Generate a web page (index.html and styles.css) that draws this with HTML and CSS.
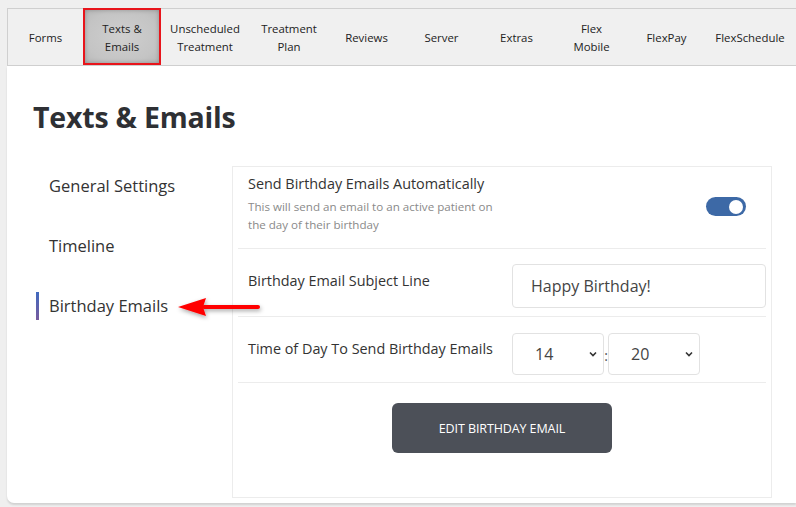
FILE: index.html
```html
<!DOCTYPE html>
<html>
<head>
<meta charset="utf-8">
<link rel="stylesheet" href="styles.css">
</head>
<body>
<nav class="nav">
  <div class="tab w76">Forms</div>
  <div class="tab w77 active">Texts &amp;<br>Emails</div>
  <div class="tab w88">Unscheduled<br>Treatment</div>
  <div class="tab w84">Treatment<br>Plan</div>
  <div class="tab w68">Reviews</div>
  <div class="tab w82">Server</div>
  <div class="tab w68">Extras</div>
  <div class="tab w82">Flex<br>Mobile</div>
  <div class="tab w68">FlexPay</div>
  <div class="tab w96">FlexSchedule</div>
</nav>
<main class="card">
  <h1 class="title">Texts &amp; Emails</h1>
  <div class="content">
    <aside class="side">
      <div class="side-item">General Settings</div>
      <div class="side-item">Timeline</div>
      <div class="side-item current">Birthday Emails</div>
      <svg class="arrow" width="96" height="30" viewBox="0 0 96 30">
        <defs>
          <filter id="sh" x="-20%" y="-50%" width="140%" height="200%">
            <feDropShadow dx="1" dy="2" stdDeviation="2" flood-color="#000" flood-opacity="0.35"/>
          </filter>
        </defs>
        <g filter="url(#sh)">
          <path d="M84 12 L30 12" stroke="#f00" stroke-width="4" stroke-linecap="round"/>
          <path d="M4 12 L32 3 L29 12 L32 21 Z" fill="#f00"/>
        </g>
      </svg>
    </aside>
    <section class="panel">
      <div class="row row-toggle">
        <div class="text">
          <div class="label">Send Birthday Emails Automatically</div>
          <div class="hint">This will send an email to an active patient on<br>the day of their birthday</div>
        </div>
        <div class="toggle"><span class="knob"></span></div>
      </div>
      <div class="row row-subject">
        <div class="label">Birthday Email Subject Line</div>
        <div class="input">Happy Birthday!</div>
      </div>
      <div class="row row-time">
        <div class="label">Time of Day To Send Birthday Emails</div>
        <div class="selects">
          <div class="select"><span>14</span><svg class="chev" width="8" height="6" viewBox="0 0 8 6"><path d="M1 1.5 L4 4.5 L7 1.5" fill="none" stroke="#333" stroke-width="1.6"/></svg></div>
          <span class="colon">:</span>
          <div class="select"><span>20</span><svg class="chev" width="8" height="6" viewBox="0 0 8 6"><path d="M1 1.5 L4 4.5 L7 1.5" fill="none" stroke="#333" stroke-width="1.6"/></svg></div>
        </div>
      </div>
      <div class="actions">
        <button class="btn">EDIT BIRTHDAY EMAIL</button>
      </div>
    </section>
  </div>
</main>
</body>
</html>
```
FILE: styles.css
```css
* { box-sizing: border-box; }
html, body { margin: 0; padding: 0; }
body {
  background: #efefef;
  font-family: "Open Sans", "Noto Sans", sans-serif;
  color: #333;
  width: 796px;
  height: 507px;
  overflow: hidden;
}
.nav {
  margin: 8px 0 0 7px;
  height: 58px;
  display: flex;
  background: #f0f0f0;
  border-top: 1px solid #cfcfcf;
  border-bottom: 1px solid #cfcfcf;
  border-left: 1px solid #cfcfcf;
}
.tab {
  display: flex;
  align-items: center;
  justify-content: center;
  text-align: center;
  font-size: 11.4px;
  line-height: 18px;
  color: #222;
  flex: none;
  padding-top: 2px;
}
.w68 { width: 75px; }
.w76 { width: 75px; }
.w77 { width: 78px; }
.w82 { width: 75px; }
.w84 { width: 80px; }
.w88 { width: 88px; }
.w96 { width: 92px; }
.tab.active {
  margin-top: -1px;
  height: 57px;
  border: 2px solid #e8141b;
  background: radial-gradient(ellipse at center, #cfcfcf 0%, #c4c4c4 70%, #b8b8b8 100%);
  box-shadow: inset 0 0 4px rgba(0,0,0,0.25);
}
.card {
  margin-left: 7px;
  height: 437px;
  background: #fff;
  border-bottom-left-radius: 7px;
  box-shadow: 0 2px 2px rgba(0,0,0,0.12);
}
.title {
  margin: 0;
  padding: 31px 0 0 26px;
  font-size: 28.5px;
  line-height: 40px;
  font-weight: 700;
  color: #2e3034;
  letter-spacing: -0.2px;
}
.content {
  display: flex;
  margin-top: 29px;
}
.side {
  width: 225px;
  flex: none;
  position: relative;
  padding-top: 6px;
}
.side-item {
  margin-left: 29px;
  padding-left: 10px;
  font-size: 16.5px;
  line-height: 28px;
  color: #333;
  border-left: 3px solid transparent;
  height: 28px;
  margin-bottom: 32px;
}
.side-item.current {
  border-left-color: #4a66b4;
  border-image: linear-gradient(#3e6ac0, #7a5a9c) 1;
}
.arrow {
  position: absolute;
  left: 167px;
  top: 129px;
}
.panel {
  width: 540px;
  height: 332px;
  border: 1px solid #ececec;
  padding: 0 5px;
}
.row {
  display: flex;
  border-bottom: 1px solid #ececec;
  padding-left: 10px;
}
.label {
  font-size: 14.4px;
  line-height: 20px;
  color: #333;
}
.row-toggle {
  height: 82px;
  padding-top: 7px;
  justify-content: space-between;
}
.hint {
  margin-top: 4px;
  font-size: 11.6px;
  line-height: 18px;
  color: #8a8a8a;
}
.toggle {
  width: 40px;
  height: 19px;
  background: #3d69a6;
  border-radius: 10px;
  margin: 23px 20px 0 0;
  position: relative;
}
.knob {
  position: absolute;
  right: 3px;
  top: 2.5px;
  width: 14px;
  height: 14px;
  border-radius: 50%;
  background: #fff;
}
.row-subject {
  height: 68px;
  padding-top: 15px;
  justify-content: space-between;
}
.row-subject .label { padding-top: 7px; }
.input {
  width: 254px;
  height: 44px;
  border: 1px solid #e2e2e2;
  border-radius: 4px;
  font-size: 16px;
  line-height: 42px;
  padding-left: 18px;
  color: #444;
}
.row-time {
  height: 66px;
  padding-top: 16px;
}
.row-time .label { padding-top: 6px; width: 264px; flex: none; }
.selects {
  display: flex;
  align-items: center;
  height: 42px;
}
.select {
  width: 92px;
  height: 42px;
  border: 1px solid #e2e2e2;
  border-radius: 4px;
  display: flex;
  align-items: center;
  justify-content: space-between;
  padding: 0 6px 0 22px;
  font-size: 16px;
  color: #444;
}
.colon {
  width: 4px;
  font-size: 14px;
  color: #555;
  text-align: center;
  margin-top: 2px;
}
.actions {
  display: flex;
  justify-content: center;
  padding-top: 20px;
}
.btn {
  width: 220px;
  height: 50px;
  border: none;
  border-radius: 6px;
  background: #4c5058;
  color: #fff;
  font-family: "Open Sans", "Noto Sans", sans-serif;
  font-size: 12.5px;
  letter-spacing: -0.1px;
}
```
